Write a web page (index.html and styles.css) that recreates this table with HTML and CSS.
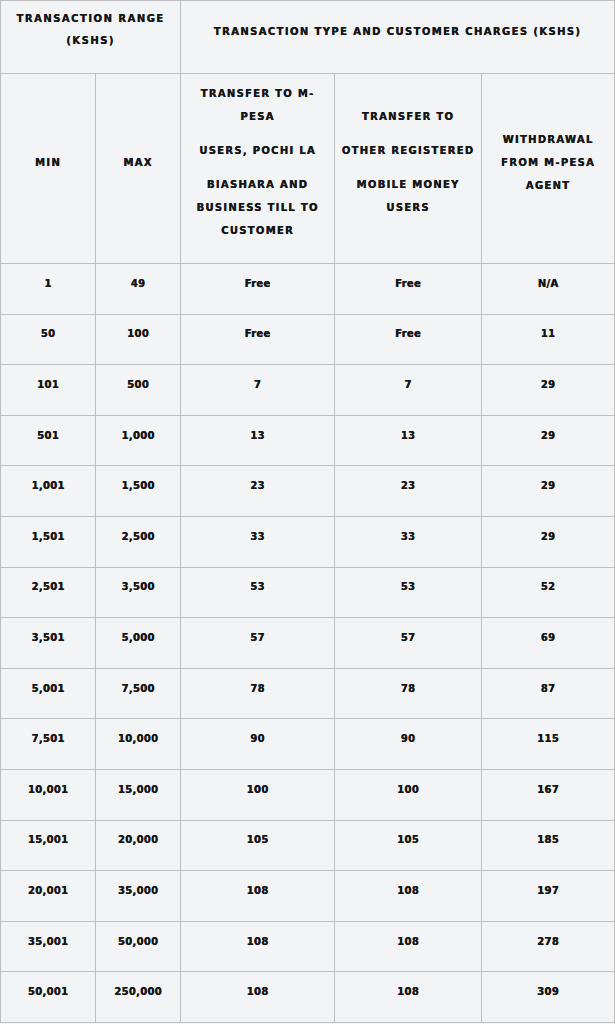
FILE: index.html
```html
<!DOCTYPE html>
<html>
<head>
<meta charset="utf-8">
<link rel="stylesheet" href="styles.css">
</head>
<body>
<table class="rates">
  <colgroup>
    <col class="c-min"><col class="c-max"><col class="c-a"><col class="c-b"><col class="c-c">
  </colgroup>
  <thead>
    <tr class="h1">
      <th colspan="2"><p>TRANSACTION RANGE<br>(KSHS)</p></th>
      <th colspan="3" class="wide"><p>TRANSACTION TYPE AND CUSTOMER CHARGES (KSHS)</p></th>
    </tr>
    <tr class="h2">
      <th><p>MIN</p></th>
      <th><p>MAX</p></th>
      <th><p>TRANSFER TO M-<br>PESA</p><p>USERS, POCHI LA</p><p>BIASHARA AND<br>BUSINESS TILL TO<br>CUSTOMER</p></th>
      <th><p>TRANSFER TO</p><p>OTHER REGISTERED</p><p>MOBILE MONEY<br>USERS</p></th>
      <th><p>WITHDRAWAL<br>FROM M-PESA<br>AGENT</p></th>
    </tr>
  </thead>
  <tbody>
    <tr><td>1</td><td>49</td><td class="free">Free</td><td class="free">Free</td><td>N/A</td></tr>
    <tr><td>50</td><td>100</td><td class="free">Free</td><td class="free">Free</td><td>11</td></tr>
    <tr><td>101</td><td>500</td><td>7</td><td>7</td><td>29</td></tr>
    <tr><td>501</td><td>1,000</td><td>13</td><td>13</td><td>29</td></tr>
    <tr><td>1,001</td><td>1,500</td><td>23</td><td>23</td><td>29</td></tr>
    <tr><td>1,501</td><td>2,500</td><td>33</td><td>33</td><td>29</td></tr>
    <tr><td>2,501</td><td>3,500</td><td>53</td><td>53</td><td>52</td></tr>
    <tr><td>3,501</td><td>5,000</td><td>57</td><td>57</td><td>69</td></tr>
    <tr><td>5,001</td><td>7,500</td><td>78</td><td>78</td><td>87</td></tr>
    <tr><td>7,501</td><td>10,000</td><td>90</td><td>90</td><td>115</td></tr>
    <tr><td>10,001</td><td>15,000</td><td>100</td><td>100</td><td>167</td></tr>
    <tr><td>15,001</td><td>20,000</td><td>105</td><td>105</td><td>185</td></tr>
    <tr><td>20,001</td><td>35,000</td><td>108</td><td>108</td><td>197</td></tr>
    <tr><td>35,001</td><td>50,000</td><td>108</td><td>108</td><td>278</td></tr>
    <tr><td>50,001</td><td>250,000</td><td>108</td><td>108</td><td>309</td></tr>
  </tbody>
</table>
</body>
</html>
```

FILE: styles.css
```css
html, body {
  margin: 0;
  padding: 0;
  background: #f3f4f6;
}
body {
  font-family: "DejaVu Sans", "Liberation Sans", sans-serif;
  color: #161616;
}
.rates {
  width: 614px;
  border-collapse: collapse;
  table-layout: fixed;
  background: #f3f4f6;
}
.c-min { width: 95px; }
.c-max { width: 85px; }
.c-a { width: 154px; }
.c-b { width: 147px; }
.c-c { width: 133px; }
.rates th, .rates td {
  border: 1px solid #bfbfbf;
  text-align: center;
  vertical-align: middle;
  padding: 0;
  font-weight: 700;
  text-shadow: 0.35px 0 0 #161616;
}
.rates th {
  font-size: 10px;
  letter-spacing: 1.3px;
  line-height: 23px;
}
.rates th p {
  margin: 0 0 11px;
}
.rates th p:last-child {
  margin-bottom: 0;
}
.h1 th {
  height: 73px;
  padding-bottom: 14px;
  box-sizing: border-box;
  letter-spacing: 1.5px;
}
.h1 th p { line-height: 22px; }
.h1 th.wide {
  padding-bottom: 10px;
  letter-spacing: 1.4px;
}
.h2 th {
  height: 190px;
  padding-bottom: 13px;
  box-sizing: border-box;
}
.rates td {
  height: 50.6px;
  box-sizing: border-box;
  padding-bottom: 11px;
  font-size: 10px;
  letter-spacing: 0.3px;
}
```
